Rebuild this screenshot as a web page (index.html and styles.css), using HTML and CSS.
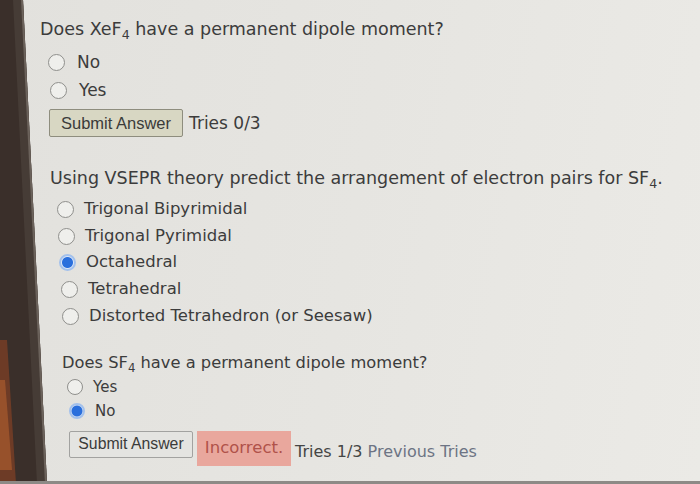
FILE: index.html
```html
<!DOCTYPE html>
<html>
<head>
<meta charset="utf-8">
<link rel="stylesheet" href="styles.css">
</head>
<body>
<div class="screen">
  <div class="bezel">
    <svg width="60" height="484" viewBox="0 0 60 484">
      <polygon points="0,0 23,0 47,484 0,484" fill="#3a2f2a"/>
      <polygon points="0,340 7,340 16,484 0,484" fill="#7a3f26" opacity="0.8"/>
      <polygon points="0,380 5,380 12,470 0,470" fill="#b4602e" opacity="0.6"/>
      <polygon points="13,0 23,0 47,484 37,484" fill="#463c36"/>
      <polygon points="21,0 23,0 47,484 45,484" fill="#6b625b"/>
    </svg>
  </div>
  <div class="content">
    <section class="q q1">
      <p class="prompt">Does XeF<sub>4</sub> have a permanent dipole moment?</p>
      <label class="opt o1"><span class="radio"></span>No</label>
      <label class="opt o2"><span class="radio"></span>Yes</label>
      <div class="submit-row">
        <button class="btn btn-green">Submit Answer</button>
        <span class="tries">Tries 0/3</span>
      </div>
    </section>
    <section class="q q2">
      <p class="prompt">Using VSEPR theory predict the arrangement of electron pairs for SF<sub>4</sub>.</p>
      <label class="opt p1"><span class="radio"></span>Trigonal Bipyrimidal</label>
      <label class="opt p2"><span class="radio"></span>Trigonal Pyrimidal</label>
      <label class="opt p3"><span class="radio on"></span>Octahedral</label>
      <label class="opt p4"><span class="radio"></span>Tetrahedral</label>
      <label class="opt p5"><span class="radio"></span>Distorted Tetrahedron (or Seesaw)</label>
    </section>
    <section class="q q3">
      <p class="prompt">Does SF<sub>4</sub> have a permanent dipole moment?</p>
      <label class="opt r1"><span class="radio"></span>Yes</label>
      <label class="opt r2"><span class="radio on"></span>No</label>
      <div class="submit-row">
        <button class="btn btn-gray">Submit Answer</button>
        <span class="incorrect">Incorrect.</span>
        <span class="tries small">Tries 1/3 <span class="prev">Previous Tries</span></span>
      </div>
    </section>
  </div>
</div>
</body>
</html>
```

FILE: styles.css
```css
html, body {
  margin: 0;
  padding: 0;
}
body {
  width: 700px;
  height: 484px;
  overflow: hidden;
  font-family: "DejaVu Sans", Verdana, sans-serif;
  color: #3c3c3c;
}
.screen {
  position: relative;
  width: 700px;
  height: 484px;
  background: linear-gradient(100deg, #e2e1dd 0%, #e6e5e1 50%, #ebeae6 100%);
  border-bottom: 3px solid #8d8a86;
  box-sizing: border-box;
  overflow: hidden;
}
.bezel {
  position: absolute;
  left: 0;
  top: 0;
  width: 60px;
  height: 484px;
}
.bezel svg { display: block; }
.content {
  padding-top: 15px;
}
.q { display: flex; flex-direction: column; }
.prompt {
  margin: 0;
  font-size: 17.5px;
  line-height: 28px;
  white-space: nowrap;
}
sub {
  font-size: 0.72em;
  vertical-align: -0.3em;
  line-height: 0;
}
.opt {
  display: flex;
  align-items: center;
  white-space: nowrap;
}
.radio {
  box-sizing: border-box;
  width: 17px;
  height: 17px;
  border-radius: 50%;
  border: 1.5px solid #8f8f8c;
  background: #efefec;
  flex: none;
}
.radio.on {
  border: 2.5px solid #a3c1ec;
  background: radial-gradient(circle, #2a6fdc 0 5px, #dfe8f6 6px);
}

/* question 1 */
.q1 .prompt { margin-left: 40px; }
.q1 .opt {
  font-size: 17px;
  line-height: 28px;
  gap: 12px;
}
.q1 .o1 { margin-left: 48px; margin-top: 5px; }
.q1 .o2 { margin-left: 50px; }
.submit-row {
  display: flex;
  align-items: center;
  white-space: nowrap;
}
.q1 .submit-row { margin-left: 49px; margin-top: 5px; gap: 6px; }
.btn {
  font-family: "Liberation Sans", Arial, sans-serif;
  color: #3b3b3a;
  padding: 0;
  text-align: center;
}
.btn-green {
  width: 134px;
  height: 28px;
  font-size: 16.5px;
  background: #d8d7c3;
  border: 1.5px solid #8e8d7e;
  border-radius: 2px;
}
.tries { font-size: 17px; }

/* question 2 */
.q2 .prompt { margin-left: 50px; margin-top: 27px; font-size: 17.5px; }
.q2 .opt {
  font-size: 16.5px;
  line-height: 26.7px;
  gap: 10px;
}
.q2 .p1 { margin-left: 57px; margin-top: 4px; }
.q2 .p2 { margin-left: 58px; }
.q2 .p3 { margin-left: 59px; }
.q2 .p4 { margin-left: 61px; }
.q2 .p5 { margin-left: 62px; }

/* question 3 */
.q3 .prompt { margin-left: 62px; margin-top: 19px; font-size: 16.3px; }
.q3 .opt {
  font-size: 15px;
  line-height: 24.5px;
  gap: 10px;
}
.q3 .radio { width: 16px; height: 16px; }
.q3 .r1 { margin-left: 67px; margin-top: -2px; }
.q3 .r2 { margin-left: 69px; }
.q3 .submit-row { margin-left: 69px; margin-top: 7px; gap: 4px; align-items: flex-start; }
.btn-gray {
  width: 124px;
  height: 27px;
  font-size: 15.8px;
  background: #e4e4e1;
  border: 1.5px solid #a2a2a0;
  border-radius: 2px;
}
.incorrect {
  background: #e9a79d;
  color: #b0524a;
  font-size: 16.5px;
  width: 94px;
  height: 35px;
  line-height: 34px;
  text-align: center;
}
.tries.small {
  font-size: 16px;
  line-height: 42px;
  color: #454545;
}
.prev { color: #6d7484; }
```
